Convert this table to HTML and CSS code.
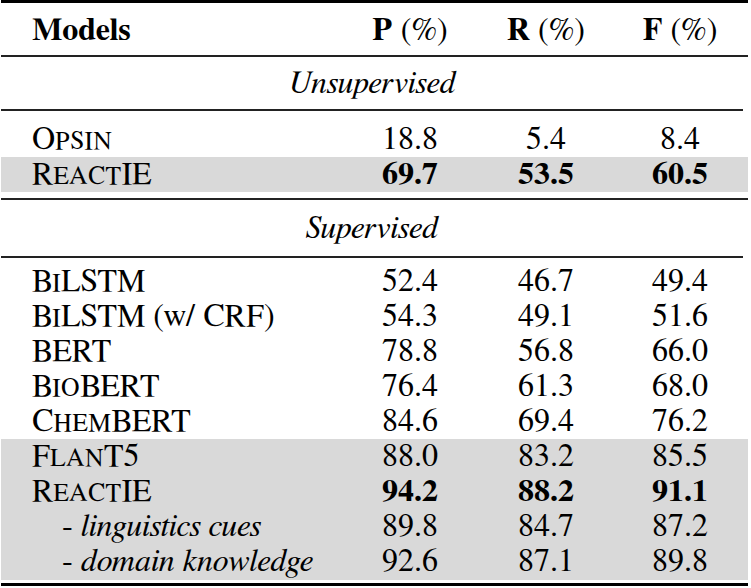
FILE: index.html
```html
<!DOCTYPE html>
<html>
<head>
<meta charset="utf-8">
<link rel="stylesheet" href="styles.css">
</head>
<body>
<div class="table">
  <div class="row head">
    <div class="name"><b>Models</b></div>
    <div class="num"><b>P</b> (%)</div>
    <div class="num"><b>R</b> (%)</div>
    <div class="num"><b>F</b> (%)</div>
  </div>
  <div class="group"><i>Unsupervised</i></div>
  <div class="body first">
    <div class="row">
      <div class="name">O<span class="sc">psin</span></div>
      <div class="num">18.8</div><div class="num">5.4</div><div class="num">8.4</div>
    </div>
    <div class="row shade">
      <div class="name">R<span class="sc">eact</span>IE</div>
      <div class="num"><b>69.7</b></div><div class="num"><b>53.5</b></div><div class="num"><b>60.5</b></div>
    </div>
  </div>
  <div class="group sup"><i>Supervised</i></div>
  <div class="body second">
    <div class="row">
      <div class="name">B<span class="sc">i</span>LSTM</div>
      <div class="num">52.4</div><div class="num">46.7</div><div class="num">49.4</div>
    </div>
    <div class="row">
      <div class="name">B<span class="sc">i</span>LSTM (w/ CRF)</div>
      <div class="num">54.3</div><div class="num">49.1</div><div class="num">51.6</div>
    </div>
    <div class="row">
      <div class="name">BERT</div>
      <div class="num">78.8</div><div class="num">56.8</div><div class="num">66.0</div>
    </div>
    <div class="row">
      <div class="name">B<span class="sc">io</span>BERT</div>
      <div class="num">76.4</div><div class="num">61.3</div><div class="num">68.0</div>
    </div>
    <div class="row">
      <div class="name">C<span class="sc">hem</span>BERT</div>
      <div class="num">84.6</div><div class="num">69.4</div><div class="num">76.2</div>
    </div>
    <div class="shadeblock">
      <div class="row">
        <div class="name">F<span class="sc">lan</span>T5</div>
        <div class="num">88.0</div><div class="num">83.2</div><div class="num">85.5</div>
      </div>
      <div class="row">
        <div class="name">R<span class="sc">eact</span>IE</div>
        <div class="num"><b>94.2</b></div><div class="num"><b>88.2</b></div><div class="num"><b>91.1</b></div>
      </div>
      <div class="row">
        <div class="name sub">- <i>linguistics cues</i></div>
        <div class="num">89.8</div><div class="num">84.7</div><div class="num">87.2</div>
      </div>
      <div class="row">
        <div class="name sub">- <i>domain knowledge</i></div>
        <div class="num">92.6</div><div class="num">87.1</div><div class="num">89.8</div>
      </div>
    </div>
  </div>
</div>
</body>
</html>
```

FILE: styles.css
```css
html, body {
  margin: 0;
  padding: 0;
  background: #ffffff;
}

body {
  font-family: "Nimbus Roman", "FreeSerif", "TeX Gyre Termes", "Noto Serif", "DejaVu Serif", serif;
  font-size: 32px;
  color: #000;
}

.table {
  margin-left: 1px;
  width: 747px;
  border-top: 3px solid #000;
  border-bottom: 3px solid #000;
}

.row {
  display: grid;
  grid-template-columns: 344px 130px 142px 126px;
  height: 35px;
  line-height: 35px;
  white-space: nowrap;
}

.row.head {
  height: 52px;
  line-height: 54px;
  border-bottom: 2px solid #222;
}

.name {
  padding-left: 31px;
}

.name.sub {
  padding-left: 61px;
}

.num {
  text-align: center;
}

.sc {
  font-size: 0.8em;
  text-transform: uppercase;
  letter-spacing: 0.02em;
}

.group {
  height: 52px;
  line-height: 53px;
  text-align: center;
  width: 742px;
  border-bottom: 2px solid #222;
}

.group.sup {
  height: 56px;
  line-height: 57px;
}

.body.first {
  padding-top: 11px;
  padding-bottom: 6px;
  border-bottom: 2px solid #222;
}

.body.second {
  padding-top: 6px;
  padding-bottom: 3px;
}

.shade,
.shadeblock {
  background: #d9d9d9;
}

.shadeblock {
  padding-bottom: 1px;
}
```
